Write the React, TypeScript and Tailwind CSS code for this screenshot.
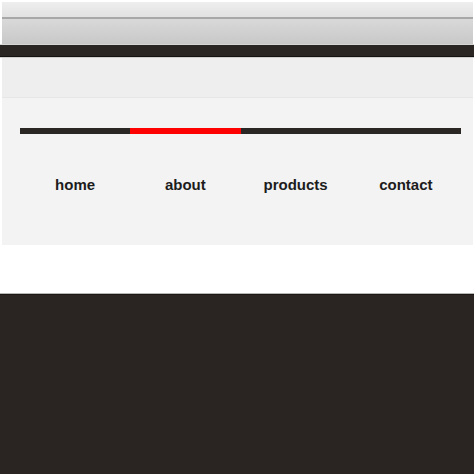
import React from "react";

const items = ["home", "about", "products", "contact"];

export default function App() {
  return (
    <div className="w-[474px] h-[474px] bg-white flex flex-col overflow-hidden" style={{ fontFamily: '"Liberation Sans", Arial, sans-serif' }}>
      <div className="h-[2px] bg-white" />
      <div className="ml-[2px] mr-[1px] h-[15px] bg-gradient-to-b from-[#eeeeee] to-[#e2e2e2]" />
      <div className="ml-[2px] mr-[1px] h-[2px] bg-[#a8a8a8]" />
      <div className="ml-[2px] mr-[1px] h-[25px] bg-gradient-to-b from-[#d9d9d9] to-[#c8c8c8]" />
      <div className="h-[1px] bg-[#d6d6d6]" />
      <div className="h-[12px] bg-[#2a2624] border-b border-[#151211]" />
      <div className="h-[1px] bg-[#cfcfcf]" />
      <div className="ml-[2px] mr-[1px] h-[39px] bg-[#eeeeee]" />
      <div className="ml-[2px] mr-[1px] h-[1px] bg-[#e6e6e6]" />
      <div className="ml-[2px] mr-[1px] h-[147px] bg-[#f3f3f3] flex flex-col pt-[30px]">
        <div className="ml-[18px] mr-[12px] h-[6px] grid grid-cols-4">
          <div className="bg-[#2a2624]" />
          <div className="bg-[#ff0000]" />
          <div className="bg-[#2a2624]" />
          <div className="bg-[#2a2624]" />
        </div>
        <div className="ml-[18px] mr-[12px] mt-[42px] grid grid-cols-4 text-[15px] font-bold text-[#1c1c1c] leading-[18px]">
          {items.map((t) => (
            <div key={t} className="text-center">{t}</div>
          ))}
        </div>
      </div>
      <div className="h-[48px] bg-white" />
      <div className="h-[1px] bg-[#b8b8b8]" />
      <div className="h-[1px] bg-[#1a1715]" />
      <div className="flex-1 bg-[#2a2523]" />
    </div>
  );
}
